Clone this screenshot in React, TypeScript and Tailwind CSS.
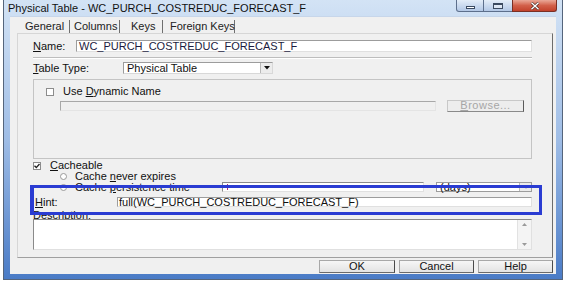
import React from "react";

const U = ({ children }: { children: React.ReactNode }) => (
  <span className="underline underline-offset-[1px]">{children}</span>
);

const CheckBox = ({ checked }: { checked?: boolean }) => (
  <span className="w-[8px] h-[8px] border border-[#8c8c8c] bg-white flex items-center justify-center shrink-0">
    {checked && (
      <svg width="6" height="6" viewBox="0 0 6 6">
        <path d="M0.5 2.8 L2.3 4.6 L5.5 1" stroke="#222" strokeWidth="1.4" fill="none" />
      </svg>
    )}
  </span>
);

const Radio = () => (
  <span className="w-[7px] h-[7px] rounded-full border border-[#9a9a9a] bg-white shrink-0" />
);

const DropArrow = () => (
  <span className="w-[12px] h-full border-l border-[#b8b8b8] bg-[#ececec] flex items-center justify-center">
    <svg width="6" height="4" viewBox="0 0 6 4">
      <path d="M0 0 H6 L3 3.5 Z" fill="#111" />
    </svg>
  </span>
);

const Button = ({ label, w }: { label: string; w: string }) => (
  <div
    className={`${w} h-[13px] flex items-center justify-center border border-[#a8a8a8] border-r-[#4a4a4a] border-b-[#6a6a6a] bg-gradient-to-b from-[#f6f6f6] to-[#e3e3e3] text-[#111]`}
  >
    {label}
  </div>
);

const tabs = [
  { label: "General", cls: "w-[47px] pl-[2px]" },
  { label: "Columns", cls: "w-[50px] pl-[4px]" },
  { label: "Keys", cls: "w-[43px] pl-[11px]" },
  { label: "Foreign Keys", cls: "w-[72px] pl-[7px]" },
];

export default function App() {
  return (
    <div className="relative w-[568px] h-[281px] overflow-hidden bg-white pl-[3px] pr-[5px] pb-[1px] font-['Liberation_Sans',Arial,sans-serif] text-[11px] leading-none text-[#111]">
      <div className="h-full flex flex-col border border-t-0 border-[#55657c] bg-gradient-to-b from-[#d3e3f5] via-[#9fbde6] to-[#4a7bc6]">
        {/* title bar */}
        <div className="h-[16px] shrink-0 flex items-start justify-between">
          <span className="pl-[4px] pt-[3px] text-[#111]">Physical Table - WC_PURCH_COSTREDUC_FORECAST_F</span>
          <div className="flex mr-[5px] h-[12px]">
            <div className="w-[28px] h-full rounded-bl-[3px] border border-t-0 border-[#5d6f8c] bg-gradient-to-b from-[#e4edf8] to-[#b3c8e6] flex items-end justify-center pb-[2px]">
              <span className="w-[9px] h-[3px] bg-white border border-[#3b4a60]" />
            </div>
            <div className="w-[28px] h-full border-b border-[#5d6f8c] bg-gradient-to-b from-[#e4edf8] to-[#b3c8e6] flex items-center justify-center">
              <span className="w-[10px] h-[6px] border border-[#3b4a60] border-t-2 bg-white/40" />
            </div>
            <div className="w-[45px] h-full rounded-br-[3px] border border-t-0 border-[#7a2f24] bg-gradient-to-b from-[#e9a898] via-[#d2604a] to-[#c2412b] flex items-center justify-center">
              <svg width="10" height="8" viewBox="0 0 10 8">
                <path d="M1.5 0.8 L8.5 7.2 M8.5 0.8 L1.5 7.2" stroke="#3a1c18" strokeWidth="2.6" />
                <path d="M1.5 0.8 L8.5 7.2 M8.5 0.8 L1.5 7.2" stroke="#fff" strokeWidth="1.5" />
              </svg>
            </div>
          </div>
        </div>

        {/* client area */}
        <div className="flex-1 mx-[6px] mb-[5px] bg-[#f0f0f0] flex flex-col pl-[7px] pr-[3px] border-t border-[#c7d6ea]">
          {/* tabs */}
          <div className="h-[16px] pt-[2px] pl-[6px] flex items-end">
            {tabs.map((t) => (
              <div key={t.label} className={`${t.cls} h-[13px] flex items-center whitespace-nowrap border-r border-[#6f6f6f] text-[#222]`}>
                {t.label}
              </div>
            ))}
          </div>

          {/* tab page */}
          <div className="h-[225px] border border-[#d6d6d6] border-r-[#6c6c6c] border-b-[#a0a0a0] flex flex-col pl-[15px] pr-[20px]">
            {/* Name */}
            <div className="mt-[6px] flex items-center h-[12px]">
              <span className="w-[43px]"><U>N</U>ame:</span>
              <div className="flex-1 h-full bg-white border border-[#9c9c9c] border-r-[#e0e0e0] border-b-[#e0e0e0] flex items-center pl-[2px] text-[#1b1b40]">
                WC_PURCH_COSTREDUC_FORECAST_F
              </div>
            </div>
            <div className="mt-[5px] h-[2px] border-t border-[#bdbdbd] border-b border-b-white" />

            {/* Table Type */}
            <div className="mt-[3px] flex items-center h-[12px]">
              <span className="w-[90px]"><U>T</U>able Type:</span>
              <div className="w-[150px] h-full bg-white border border-[#9c9c9c] border-r-[#d8d8d8] border-b-[#d8d8d8] flex items-center justify-between">
                <span className="pl-[3px]">Physical Table</span>
                <DropArrow />
              </div>
            </div>

            {/* group box */}
            <div className="mt-[5px] h-[80px] border border-[#c4c4c4] flex flex-col pl-[12px] pr-[7px]">
              <div className="mt-[7px] flex items-center gap-[9px] h-[9px]">
                <CheckBox />
                <span>Use <U>D</U>ynamic Name</span>
              </div>
              <div className="mt-[4px] flex items-center justify-between h-[11px]">
                <div className="ml-[14px] w-[376px] h-[10px] bg-[#f0f0f0] border border-[#a8a8a8] border-r-[#e4e4e4] border-b-[#e4e4e4]" />
                <div className="w-[77px] h-[12px] border border-[#c8c8c8] border-r-[#5a5a5a] border-b-[#8a8a8a] bg-[#ededed] flex items-center justify-center text-[#a6a6a6] tracking-[0.5px]">
                  <U>B</U>rowse...
                </div>
              </div>
            </div>

            {/* Cacheable */}
            <div className="mt-[2px] flex items-center gap-[9px] h-[9px]">
              <CheckBox checked />
              <span><U>C</U>acheable</span>
            </div>
            <div className="mt-[2px] ml-[27px] flex items-center gap-[8px] h-[9px]">
              <Radio />
              <span>Cache <U>n</U>ever expires</span>
            </div>
            <div className="mt-[1px] flex items-center h-[10px]">
              <div className="w-[162px] ml-[27px] flex items-center gap-[8px] whitespace-nowrap">
                <Radio />
                <span>Cache <U>p</U>ersistence time</span>
              </div>
              <div className="w-[202px] h-full bg-white border border-[#8a8a8a] border-r-[#e0e0e0] border-b-[#e0e0e0] flex items-center pl-[4px]">
                <span className="w-[1px] h-[6px] bg-[#b0307a]" />
              </div>
              <div className="ml-[12px] flex-1 h-full bg-white border border-[#9c9c9c] flex items-center justify-between">
                <span className="pl-[3px]">(days)</span>
                <DropArrow />
              </div>
            </div>

            {/* Hint */}
            <div className="mt-[5px] flex items-center h-[10px]">
              <span className="w-[84px] pl-[2px]"><U>H</U>int:</span>
              <div className="flex-1 h-full bg-white border border-[#9c9c9c] border-r-[#e0e0e0] border-b-[#e0e0e0] flex items-center pl-[1px] text-[#111]">
                full(WC_PURCH_COSTREDUC_FORECAST_F)
              </div>
            </div>
            <div className="mt-[3px] h-[8px]"><U>D</U>escription:</div>
            <div className="mt-[1px] h-[31px] bg-white border border-[#8a8a8a] border-r-[#e0e0e0] border-b-[#e0e0e0] flex justify-end">
              <div className="w-[14px] h-full border-l border-[#e2e2e2] bg-[#f4f4f4] flex flex-col items-center justify-between py-[3px]">
                <svg width="5" height="3" viewBox="0 0 5 3"><path d="M0 3 L2.5 0 L5 3 Z" fill="#9a9a9a" /></svg>
                <svg width="5" height="3" viewBox="0 0 5 3"><path d="M0 0 L2.5 3 L5 0 Z" fill="#9a9a9a" /></svg>
              </div>
            </div>
          </div>

          {/* buttons */}
          <div className="mt-[2px] flex justify-end gap-[4px]">
            <Button label="OK" w="w-[76px]" />
            <Button label="Cancel" w="w-[75px]" />
            <Button label="Help" w="w-[75px]" />
          </div>
        </div>
      </div>

      {/* highlight annotation */}
      <div className="absolute left-[30px] top-[185px] w-[512px] h-[30px] border-[3px] border-l-4 border-[#2a3cd2]" />
    </div>
  );
}
